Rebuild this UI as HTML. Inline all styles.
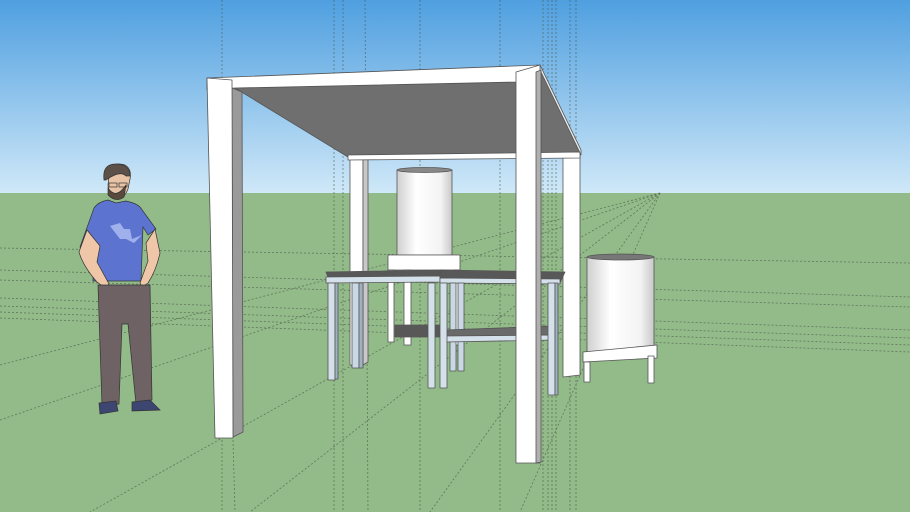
<!DOCTYPE html>
<html><head><meta charset="utf-8"><style>html,body{margin:0;padding:0;width:910px;height:512px;overflow:hidden}</style></head>
<body>
<svg width="910" height="512" viewBox="0 0 910 512" xmlns="http://www.w3.org/2000/svg">
<defs>
<linearGradient id="sky" x1="0" y1="0" x2="0" y2="1">
<stop offset="0" stop-color="#4f9fe0"/><stop offset="1" stop-color="#cfe8f8"/>
</linearGradient>
<linearGradient id="cyl" x1="0" y1="0" x2="1" y2="0">
<stop offset="0" stop-color="#cfcfcf"/><stop offset="0.35" stop-color="#ffffff"/><stop offset="0.8" stop-color="#f3f3f3"/><stop offset="1" stop-color="#c8c8c8"/>
</linearGradient>
</defs>
<rect width="910" height="193" fill="url(#sky)"/>
<rect y="193" width="910" height="319" fill="#93ba89"/>
<!-- guide lines -->
<g stroke="#4a5a48" stroke-width="0.8" stroke-dasharray="2,2" fill="none" opacity="0.7">
<line x1="660" y1="193" x2="0" y2="365"/>
<line x1="660" y1="193" x2="0" y2="420"/>
<line x1="660" y1="193" x2="90" y2="512"/>
<line x1="660" y1="193" x2="250" y2="512"/>
<line x1="660" y1="193" x2="430" y2="512"/>
<line x1="660" y1="193" x2="520" y2="512"/>
<line x1="0" y1="248" x2="910" y2="263"/>
<line x1="0" y1="270" x2="910" y2="297"/>
<line x1="0" y1="280" x2="910" y2="307"/>
<line x1="0" y1="298" x2="910" y2="330"/>
<line x1="0" y1="306" x2="910" y2="338"/>
<line x1="0" y1="312" x2="910" y2="345"/>
<line x1="0" y1="318" x2="910" y2="352"/>
<line x1="222" y1="0" x2="222" y2="512"/>
<line x1="233" y1="440" x2="235" y2="512"/>
<line x1="334" y1="0" x2="334" y2="512"/>
<line x1="343" y1="0" x2="343" y2="512"/>
<line x1="365" y1="0" x2="368" y2="512"/>
<line x1="420" y1="0" x2="420" y2="512"/>
<line x1="500" y1="0" x2="500" y2="512"/>
<line x1="543" y1="0" x2="543" y2="512"/>
<line x1="548" y1="0" x2="548" y2="512"/>
<line x1="552" y1="0" x2="552" y2="512"/>
<line x1="556" y1="0" x2="556" y2="512"/>
<line x1="570" y1="0" x2="570" y2="512"/>
<line x1="576" y1="0" x2="576" y2="512"/>
</g>
<g stroke="#555" stroke-width="0.8" stroke-linejoin="round">
<!-- back posts -->
<polygon points="350,156 363,156 363,365 350,365" fill="#fff"/>
<polygon points="363,158 368,158 368,362 363,365" fill="#c8c8c8"/>
<polygon points="563,154 580,154 580,375 563,377" fill="#fff"/>
<!-- roof underside -->
<polygon points="235,88 517,82 517,156 348,157" fill="#6f6f6f"/>
<polygon points="540,67 581,152 540,155" fill="#6f6f6f"/>
<polygon points="348,155 580,152 580,158 348,160" fill="#fff"/>
<polygon points="540,65 581,150 581,155 540,70" fill="#e8e8e8"/>
<!-- back tank -->
<rect x="397" y="170" width="55" height="85" fill="url(#cyl)"/>
<ellipse cx="424.5" cy="170" rx="27.5" ry="2.5" fill="#888"/>
<polygon points="388,255 460,255 460,270 388,270" fill="#fff"/>
<rect x="404" y="270" width="7" height="75" fill="#fff"/>
<rect x="388" y="270" width="6" height="72" fill="#fff"/>
<rect x="454" y="270" width="6" height="75" fill="#fff"/>
<!-- left table -->
<polygon points="326,272 445,270 440,280 330,282" fill="#585858"/>
<polygon points="326,277 440,276 440,282 326,283" fill="#d4e0ea"/>
<rect x="352" y="283" width="7" height="85" fill="#c9d8e4"/>
<rect x="359" y="283" width="4" height="85" fill="#9fb2c2"/>
<rect x="328" y="283" width="7" height="97" fill="#d4e0ea"/>
<rect x="335" y="283" width="3" height="96" fill="#9fb2c2"/>
<rect x="395" y="325" width="45" height="12" fill="#585858"/>
<rect x="428" y="283" width="7" height="105" fill="#d4e0ea"/>
<!-- right table -->
<polygon points="440,270 565,272 560,283 440,282" fill="#585858"/>
<polygon points="440,278 560,279 560,284 440,283" fill="#d4e0ea"/>
<rect x="450" y="283" width="6" height="88" fill="#c9d8e4"/>
<rect x="458" y="283" width="6" height="88" fill="#c9d8e4"/>
<polygon points="445,330 555,326 555,336 445,340" fill="#6a6a6a"/>
<polygon points="445,336 555,335 555,340 445,342" fill="#d4e0ea"/>
<rect x="440" y="283" width="7" height="105" fill="#d4e0ea"/>
<rect x="548" y="283" width="7" height="112" fill="#d4e0ea"/>
<rect x="555" y="283" width="3" height="112" fill="#9fb2c2"/>
<!-- right tank -->
<rect x="587" y="257" width="67" height="95" fill="url(#cyl)"/>
<ellipse cx="620.5" cy="257" rx="33.5" ry="3" fill="#777"/>
<polygon points="583,352 657,345 657,358 583,362" fill="#fff"/>
<rect x="584" y="362" width="6" height="20" fill="#fff"/>
<rect x="648" y="356" width="6" height="27" fill="#fff"/>
<!-- front structure -->
<polygon points="207,78 540,65 540,70 517,82 235,88 207,90" fill="#fff"/>
<polygon points="232,88 242,92 243,432 233,437" fill="#9a9a9a"/>
<polygon points="207,78 232,80 233,438 215,438" fill="#fff"/>
<polygon points="516,72 540,65 540,463 516,463" fill="#fff"/>
<polygon points="536,72 541,70 541,462 536,463" fill="#b0b0b0"/>
</g>
<!-- person -->
<g stroke="#333" stroke-width="0.7">
<path d="M110,168 q5,-6 15,-3 q7,4 5,14 l-2,10 q-5,12 -12,10 q-7,-3 -8,-14 z" fill="#e9c3a6"/>
<path d="M104,180 q-2,-16 12,-16 q14,0 14,12 l-4,0 q-6,-6 -20,4 z" fill="#5c5148"/>
<path d="M108,188 q8,12 18,-3 l-2,12 q-8,6 -16,-2 z" fill="#5a4a3e"/>
<rect x="109" y="183" width="8" height="4" fill="none" stroke="#333"/>
<rect x="119" y="183" width="8" height="4" fill="none" stroke="#333"/>
<path d="M94,208 q4,-6 14,-8 l8,3 l10,-2 q10,2 14,6 l16,22 l-8,6 l-5,-8 l-2,54 l-48,0 l0,-40 l-4,10 l-9,-4 z" fill="#5c74cf"/>
<path d="M110,226 l10,-3 l4,6 l6,0 l2,10 l10,-4 l-8,8 l-8,-4 l-6,0 z" fill="#9fb0ec" stroke="none"/>
<path d="M87,230 l-8,22 q4,14 18,30 l8,6 l4,-4 l-12,-22 l3,-16 z" fill="#efc6a8"/>
<path d="M155,229 l5,24 q-4,18 -12,30 l-6,4 l-2,-4 l8,-22 l-2,-18 z" fill="#efc6a8"/>
<path d="M98,285 l52,0 l2,115 l-16,4 l-8,-80 l-6,0 l-3,80 l-17,2 z" fill="#6e6264"/>
<path d="M99,403 l17,-2 l2,10 l-18,3 z" fill="#3c4670"/>
<path d="M132,402 l18,-2 l10,10 l-28,1 z" fill="#3c4670"/>
</g>
</svg>
</body></html>
